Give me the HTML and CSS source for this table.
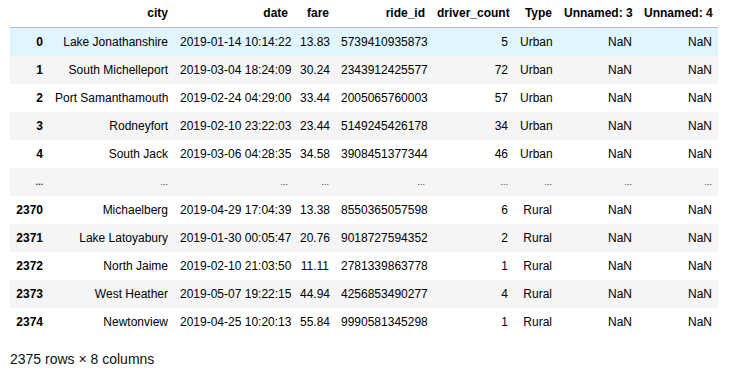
FILE: index.html
```html
<!DOCTYPE html>
<html>
<head>
<meta charset="utf-8">
<link rel="stylesheet" href="styles.css">
</head>
<body>
<div class="output">
  <table class="dataframe">
    <colgroup>
      <col class="c-idx"><col class="c-city"><col class="c-date"><col class="c-fare"><col class="c-ride"><col class="c-drv"><col class="c-type"><col class="c-un"><col class="c-un">
    </colgroup>
    <thead>
      <tr><th></th><th>city</th><th>date</th><th>fare</th><th>ride_id</th><th>driver_count</th><th>Type</th><th>Unnamed: 3</th><th>Unnamed: 4</th></tr>
    </thead>
    <tbody>
      <tr class="hover"><th>0</th><td>Lake Jonathanshire</td><td>2019-01-14 10:14:22</td><td>13.83</td><td>5739410935873</td><td>5</td><td>Urban</td><td>NaN</td><td>NaN</td></tr>
      <tr><th>1</th><td>South Michelleport</td><td>2019-03-04 18:24:09</td><td>30.24</td><td>2343912425577</td><td>72</td><td>Urban</td><td>NaN</td><td>NaN</td></tr>
      <tr><th>2</th><td>Port Samanthamouth</td><td>2019-02-24 04:29:00</td><td>33.44</td><td>2005065760003</td><td>57</td><td>Urban</td><td>NaN</td><td>NaN</td></tr>
      <tr><th>3</th><td>Rodneyfort</td><td>2019-02-10 23:22:03</td><td>23.44</td><td>5149245426178</td><td>34</td><td>Urban</td><td>NaN</td><td>NaN</td></tr>
      <tr><th>4</th><td>South Jack</td><td>2019-03-06 04:28:35</td><td>34.58</td><td>3908451377344</td><td>46</td><td>Urban</td><td>NaN</td><td>NaN</td></tr>
      <tr class="ell"><th>...</th><td>...</td><td>...</td><td>...</td><td>...</td><td>...</td><td>...</td><td>...</td><td>...</td></tr>
      <tr><th>2370</th><td>Michaelberg</td><td>2019-04-29 17:04:39</td><td>13.38</td><td>8550365057598</td><td>6</td><td>Rural</td><td>NaN</td><td>NaN</td></tr>
      <tr><th>2371</th><td>Lake Latoyabury</td><td>2019-01-30 00:05:47</td><td>20.76</td><td>9018727594352</td><td>2</td><td>Rural</td><td>NaN</td><td>NaN</td></tr>
      <tr><th>2372</th><td>North Jaime</td><td>2019-02-10 21:03:50</td><td>11.11</td><td>2781339863778</td><td>1</td><td>Rural</td><td>NaN</td><td>NaN</td></tr>
      <tr><th>2373</th><td>West Heather</td><td>2019-05-07 19:22:15</td><td>44.94</td><td>4256853490277</td><td>4</td><td>Rural</td><td>NaN</td><td>NaN</td></tr>
      <tr><th>2374</th><td>Newtonview</td><td>2019-04-25 10:20:13</td><td>55.84</td><td>9990581345298</td><td>1</td><td>Rural</td><td>NaN</td><td>NaN</td></tr>
    </tbody>
  </table>
  <p class="dims">2375 rows × 8 columns</p>
</div>
</body>
</html>
```

FILE: styles.css
```css
html, body {
  margin: 0;
  padding: 0;
  background: #fff;
}

.output {
  padding-left: 10px;
  font-family: "Liberation Sans", Arial, sans-serif;
  color: #000;
}

.dataframe {
  border-collapse: collapse;
  border-spacing: 0;
  table-layout: fixed;
  width: 708px;
  font-size: 12px;
}

.c-idx { width: 39px; }
.c-city { width: 125px; }
.c-date { width: 120px; }
.c-fare { width: 41px; }
.c-ride { width: 96px; }
.c-drv { width: 83px; }
.c-type { width: 44px; }
.c-un { width: 80px; }

.dataframe th,
.dataframe td {
  text-align: right;
  vertical-align: middle;
  padding: 6px;
  line-height: 16px;
  white-space: nowrap;
  overflow: visible;
}

.dataframe thead th {
  font-weight: bold;
  padding-top: 5px;
}

.dataframe thead tr {
  border-bottom: 1px solid #bdbdbd;
}

.dataframe tbody th {
  font-weight: bold;
}

.dataframe tbody tr:nth-child(even) {
  background: #f5f5f5;
}

.dataframe tbody tr.hover {
  background: #e1f5fe;
}

.dataframe tr.ell th,
.dataframe tr.ell td {
  font-size: 9px;
  color: #333;
}

.dims {
  margin: 14px 0 0;
  font-size: 14px;
  line-height: 18px;
  color: #111;
}
```
